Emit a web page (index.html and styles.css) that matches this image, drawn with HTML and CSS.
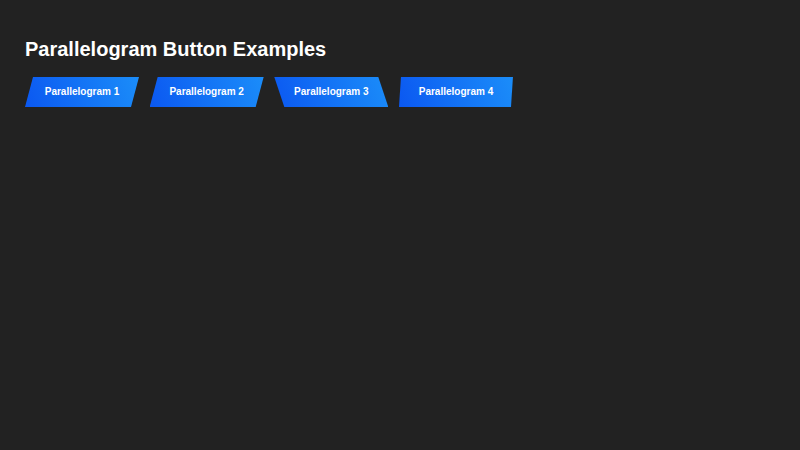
FILE: index.html
```html
<!DOCTYPE html>
<html lang="en">
<head>
<meta charset="utf-8">
<title>Parallelogram Buttons</title>
<link rel="stylesheet" href="styles.css">
</head>
<body>
<main class="page">
  <h1 class="title">Parallelogram Button Examples</h1>
  <div class="buttons">
    <button class="pbtn pbtn-1">Parallelogram 1</button>
    <button class="pbtn pbtn-2">Parallelogram 2</button>
    <button class="pbtn pbtn-3">Parallelogram 3</button>
    <button class="pbtn pbtn-4">Parallelogram 4</button>
  </div>
</main>
</body>
</html>
```
FILE: styles.css
```css
html, body {
  margin: 0;
  padding: 0;
  background: #222222;
  height: 100%;
}
body {
  font-family: "Liberation Sans", Arial, sans-serif;
  color: #ffffff;
}
.page {
  padding: 38px 25px;
}
.title {
  margin: 0;
  font-size: 20px;
  font-weight: 700;
  line-height: 23px;
  color: #ffffff;
}
.buttons {
  display: flex;
  gap: 10.67px;
  margin-top: 16px;
}
.pbtn {
  width: 114px;
  height: 30px;
  border: none;
  padding: 0 0 1px;
  font-family: "Liberation Sans", Arial, sans-serif;
  font-size: 10px;
  font-weight: 700;
  color: #ffffff;
  background: linear-gradient(70deg, #0b58f1 0%, #1b8df9 100%);
  cursor: pointer;
}
.pbtn-1,
.pbtn-2 {
  clip-path: polygon(8px 0, 100% 0, calc(100% - 8px) 100%, 0 100%);
}
.pbtn-3 {
  clip-path: polygon(0 0, calc(100% - 10px) 0, 100% 100%, 10px 100%);
}
.pbtn-4 {
  clip-path: polygon(2px 0, 100% 0, calc(100% - 2px) 100%, 0 100%);
}
```
